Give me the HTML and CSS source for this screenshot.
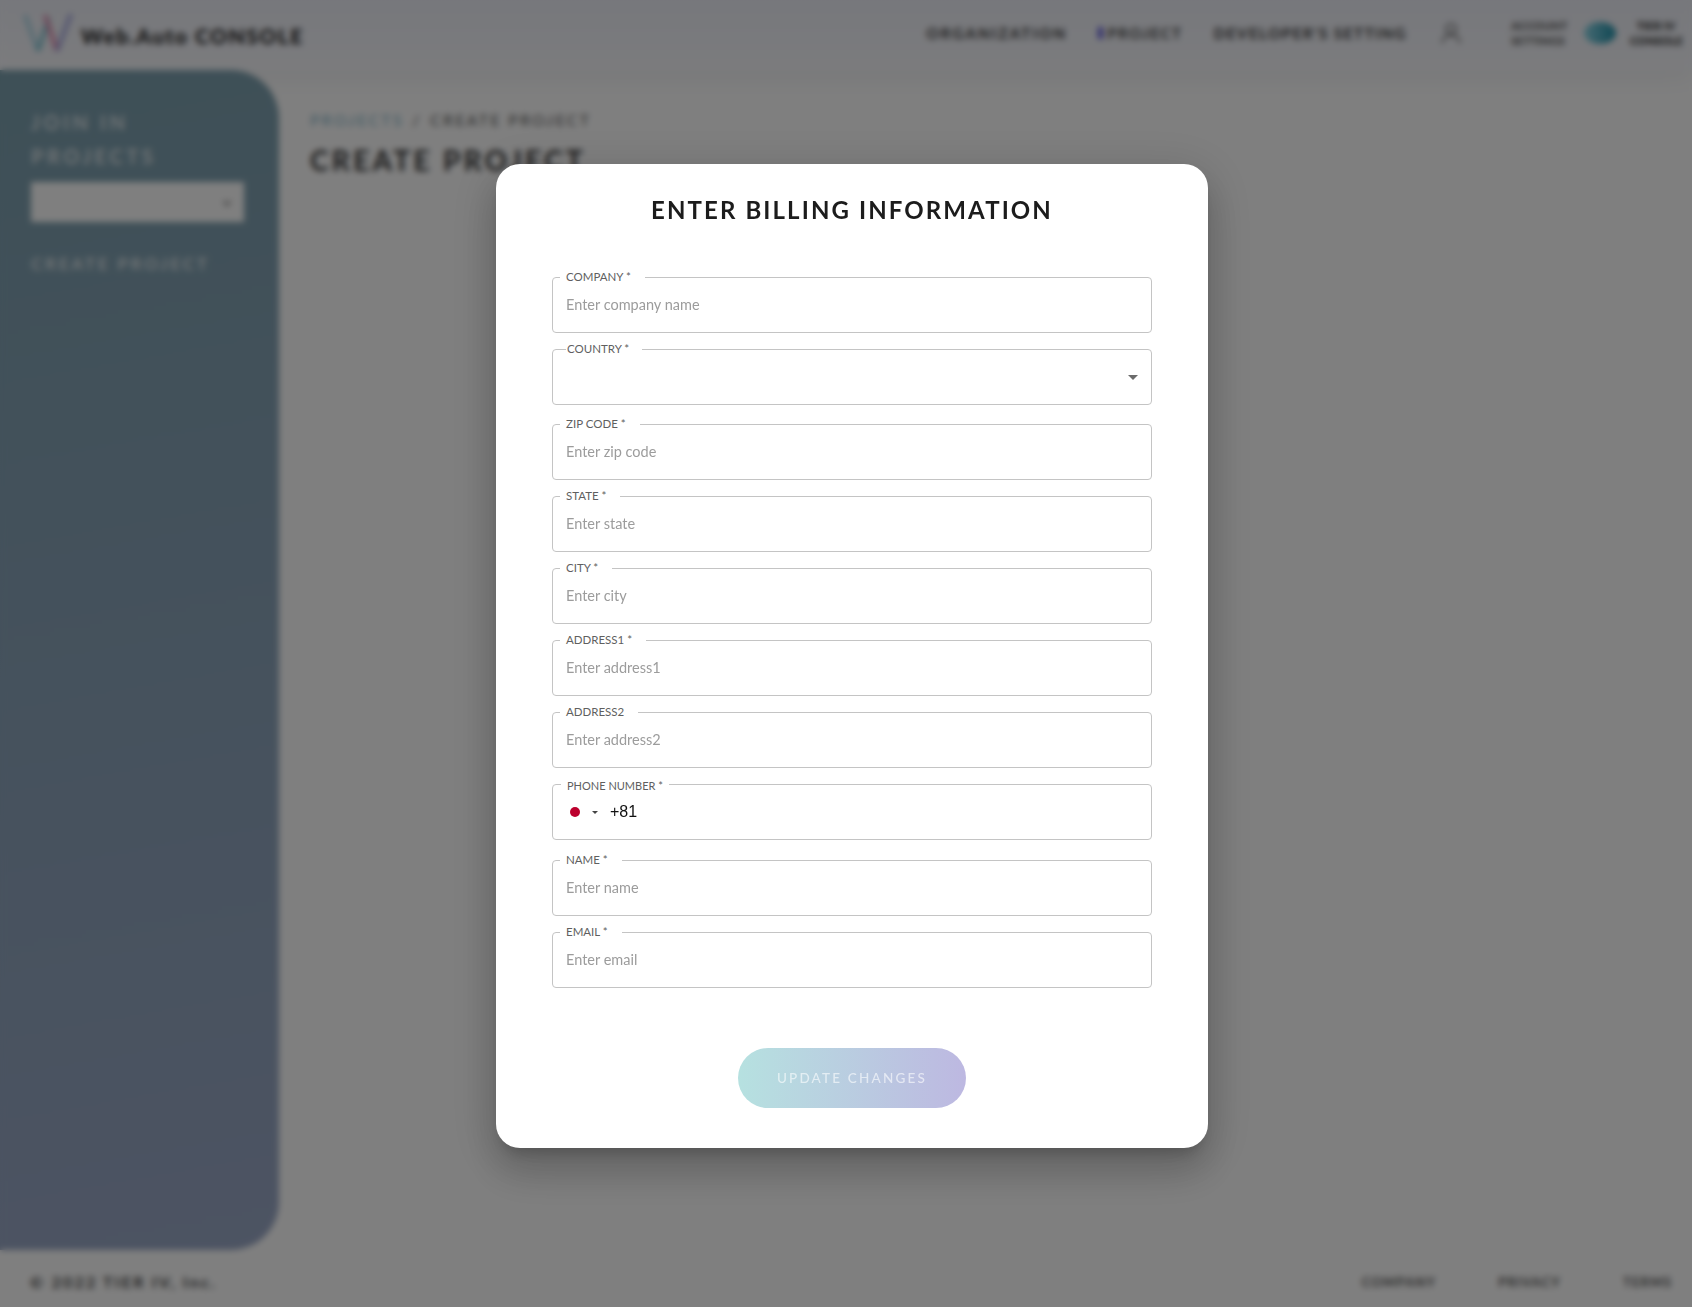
FILE: index.html
```html
<!DOCTYPE html>
<html lang="en">
<head>
<meta charset="utf-8">
<title>Web.Auto Console</title>
<link rel="stylesheet" href="styles.css">
</head>
<body>
<div class="page">
  <header class="topbar">
    <div class="brand">
      <svg class="brand-mark" viewBox="0 0 52 42" width="52" height="42" fill="none" stroke-width="4">
        <path d="M3 3 L16 39" stroke="#a9d6e6"/>
        <path d="M16 39 L27 6" stroke="#7fc4d2"/>
        <path d="M23 3 L35 39" stroke="#e58bb0"/>
        <path d="M35 39 L49 2" stroke="#a5a8e0"/>
      </svg>
      <span class="brand-name">Web.Auto CONSOLE</span>
    </div>
    <nav class="topnav">
      <a class="topnav-link topnav-link-wide">ORGANIZATION</a>
      <a class="topnav-link topnav-link-active">PROJECT</a>
      <a class="topnav-link">DEVELOPER'S SETTING</a>
      <svg class="user-icon" viewBox="0 0 24 24" width="24" height="24" fill="none" stroke="#555" stroke-width="1.6">
        <circle cx="12" cy="8" r="5"/><path d="M3 22c1-6 5-8 9-8s8 2 9 8"/>
      </svg>
      <span class="account account-light">ACCOUNT<br>SETTINGS</span>
      <span class="avatar"></span>
      <span class="account account-dark">TIER IV<br>CONSOLE</span>
    </nav>
  </header>
  <main class="workspace">
    <aside class="sidebar">
      <h2 class="sidebar-title">JOIN IN<br>PROJECTS</h2>
      <div class="sidebar-select"><span class="sidebar-caret"></span></div>
      <a class="sidebar-link">CREATE PROJECT</a>
    </aside>
    <section class="content">
      <p class="crumbs"><span class="crumb-link">PROJECTS</span> <span class="crumb-sep">/</span> CREATE PROJECT</p>
      <h1 class="content-title">CREATE PROJECT</h1>
    </section>
  </main>
  <footer class="footer">
    <span class="copyright">© 2022 TIER IV, Inc.</span>
    <nav class="footer-links">
      <a>COMPANY</a>
      <a>PRIVACY</a>
      <a>TERMS</a>
    </nav>
  </footer>
</div>

<div class="backdrop">
  <form class="dialog">
    <h2 class="dialog-title">ENTER BILLING INFORMATION</h2>
    <div class="fields">
      <div class="field"><label class="field-label">COMPANY *</label><input class="control" placeholder="Enter company name"></div>
      <div class="field field-select"><label class="field-label field-label-flush">COUNTRY *</label><select class="control"><option></option></select><svg class="select-arrow" viewBox="0 0 10 5" width="10" height="5"><path d="M0 0h10L5 5z" fill="#6b6b6b"/></svg></div>
      <div class="field"><label class="field-label">ZIP CODE *</label><input class="control" placeholder="Enter zip code"></div>
      <div class="field"><label class="field-label">STATE *</label><input class="control" placeholder="Enter state"></div>
      <div class="field"><label class="field-label">CITY *</label><input class="control" placeholder="Enter city"></div>
      <div class="field"><label class="field-label">ADDRESS1 *</label><input class="control" placeholder="Enter address1"></div>
      <div class="field"><label class="field-label">ADDRESS2</label><input class="control" placeholder="Enter address2"></div>
      <div class="field field-phone"><label class="field-label field-label-tight">PHONE NUMBER *</label>
        <span class="flag"></span>
        <svg class="flag-caret" viewBox="0 0 6 3" width="6" height="3"><path d="M0 0h6L3 3z" fill="#444"/></svg>
        <input class="control control-phone" value="+81">
      </div>
      <div class="field"><label class="field-label">NAME *</label><input class="control" placeholder="Enter name"></div>
      <div class="field"><label class="field-label">EMAIL *</label><input class="control" placeholder="Enter email"></div>
    </div>
    <button class="submit" type="button" disabled>UPDATE CHANGES</button>
  </form>
</div>
</body>
</html>
```
FILE: styles.css
```css
* { box-sizing: border-box; }
html, body { margin: 0; height: 100%; background: #fff; overflow: hidden; }
body { font-family: "Lato", "Liberation Sans", sans-serif; color: #222; }

.page { height: 100vh; display: flex; flex-direction: column; }

.topbar {
  height: 70px; flex: none; display: flex; align-items: center; justify-content: space-between;
  padding: 0 10px 4px 22px;
  background: linear-gradient(#eef0f8, #f7f8fc);
  box-shadow: 0 8px 24px rgba(120, 130, 160, .12);
}
.brand { display: flex; align-items: center; gap: 7px; }
.brand-mark { display: block; }
.brand-name { margin-top: 4px; font-size: 21px; font-weight: 900; letter-spacing: 1.5px; color: #222; white-space: nowrap; }

.topnav { display: flex; align-items: center; }
.topnav-link { display: flex; align-items: center; font-size: 15px; font-weight: 700; letter-spacing: 1.6px; color: #333; margin-right: 31px; white-space: nowrap; }
.topnav-link-wide { letter-spacing: 2.2px; }
.topnav-link-active { color: #444; }
.topnav-link-active::before { content: ""; width: 5px; height: 12px; margin-right: 4px; background: #5a55d8; }
.user-icon { margin: 0 48px 0 1px; }
.account { width: 52px; line-height: 15px; white-space: nowrap; }
.account-light { font-size: 11.5px; color: #5c5c5c; font-weight: 900; }
.account-dark { font-size: 11px; letter-spacing: .2px; color: #222; font-weight: 900; text-align: center; }
.avatar { width: 32px; height: 22px; border-radius: 50%; margin: 0 14px 0 21px; background: linear-gradient(90deg, #8fd6e6, #1f8fa8); }

.workspace { flex: 1; display: flex; min-height: 0; }
.sidebar {
  width: 279px; flex: none; padding: 35px 35px 0 31px;
  border-radius: 0 48px 48px 0;
  background: linear-gradient(170deg, #7ca0ae, #9aa8c6);
  color: rgba(255, 255, 255, .75);
}
.sidebar-title { margin: 0; font-size: 20px; line-height: 34px; font-weight: 700; letter-spacing: 3.6px; }
.sidebar-select { height: 40px; margin: 9px 0 31px; background: #fff; display: flex; align-items: center; justify-content: flex-end; padding-right: 14px; }
.sidebar-caret { width: 6px; height: 6px; border-right: 2px solid #888; border-bottom: 2px solid #888; transform: rotate(45deg); }
.sidebar-link { font-size: 17px; font-weight: 700; letter-spacing: 2.8px; white-space: nowrap; }

.content { flex: 1; padding: 40px 31px 0; }
.crumbs { margin: 0; font-size: 15.5px; line-height: 20px; letter-spacing: 2.5px; color: #555; }
.crumb-link { color: #7fb4c8; }
.crumb-sep { margin: 0 2px; }
.content-title { margin: 13px 0 0; font-size: 28px; line-height: 34px; font-weight: 700; letter-spacing: 3.3px; color: #333; }

.footer { height: 57px; flex: none; display: flex; align-items: center; justify-content: space-between; padding: 6px 20px 0 30px; }
.copyright { font-size: 16px; font-weight: 700; letter-spacing: 2.2px; color: #444; }
.footer-links { display: flex; gap: 62px; font-size: 13px; font-weight: 700; letter-spacing: 1.2px; color: #555; }

.backdrop {
  position: fixed; inset: 0; display: flex; justify-content: center; align-items: flex-start;
  padding: 164px 0 0 12px;
  background: rgba(0, 0, 0, .5);
  -webkit-backdrop-filter: blur(3px);
  backdrop-filter: blur(3px);
}
.dialog {
  width: 712px; padding: 31px 56px 40px; border-radius: 24px; background: #fff;
  display: flex; flex-direction: column; align-items: center;
  box-shadow: 0 11px 15px -7px rgba(0,0,0,.2), 0 24px 38px 3px rgba(0,0,0,.14), 0 9px 46px 8px rgba(0,0,0,.12);
}
.dialog-title { margin: 0 0 52px; font-size: 24px; line-height: 30px; font-weight: 700; letter-spacing: 2.1px; color: #1c1c1c; white-space: nowrap; }

.fields { width: 100%; display: flex; flex-direction: column; gap: 16px; }
.field {
  position: relative; height: 56px; display: flex; align-items: center; padding: 0 13px;
  border: 1px solid #c4c4c4; border-radius: 4px; background: #fff;
}
.field-select { margin-bottom: 3px; }
.field-phone { margin-bottom: 4px; }
.field-label {
  position: absolute; top: -9px; left: 7px; padding: 0 14px 0 6px;
  font-size: 11.5px; line-height: 16px; color: #5f5f5f; background: #fff; white-space: nowrap;
}
.field-label-flush { left: 13px; padding: 0 13px 0 1px; }
.field-label-tight { top: -7px; left: 8px; padding-right: 6px; font-size: 11px; }
.control {
  flex: 1; min-width: 0; height: 100%; border: 0; padding: 0 0 2px; outline: 0; background: transparent;
  font: 400 14.5px "Lato", "Liberation Sans", sans-serif; color: #222;
  appearance: none; -webkit-appearance: none;
}
.control::placeholder { color: #9c9c9c; opacity: 1; }
.select-arrow { flex: none; }
.flag { flex: none; width: 10px; height: 10px; margin-left: 4px; border-radius: 50%; background: #bc002d; }
.flag-caret { flex: none; margin: 0 12px 0 12px; }
.control-phone { padding: 0; font: 400 16px "Liberation Sans", Arial, sans-serif; color: #111; }

.submit {
  width: 228px; height: 60px; margin-top: 60px; border: 0; border-radius: 30px; padding: 0;
  background: linear-gradient(90deg, #b6e1e0, #bdb8e1);
  font: 500 13.5px "Lato", "Liberation Sans", sans-serif; letter-spacing: 2.2px; color: rgba(255, 255, 255, .6);
}
```
